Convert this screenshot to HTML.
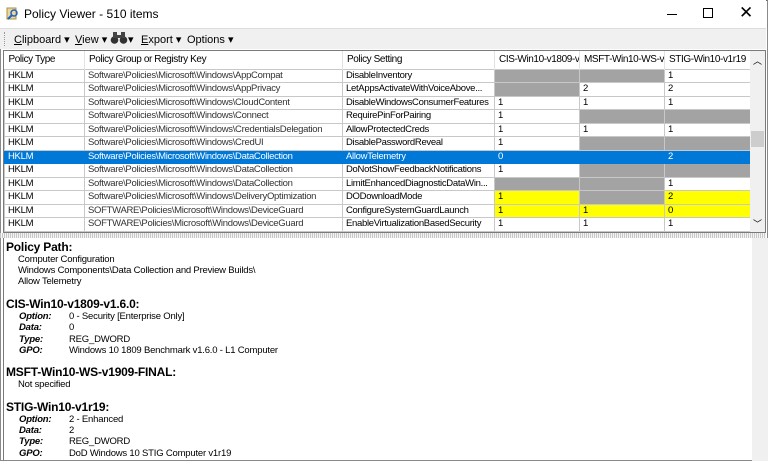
<!DOCTYPE html>
<html><head><meta charset="utf-8"><style>
*{margin:0;padding:0;box-sizing:border-box}
body{width:768px;height:461px;overflow:hidden;background:#fff;font-family:"Liberation Sans",Arial,sans-serif;position:relative;color:#000}
.win{position:absolute;left:0;top:0;width:768px;height:461px;border:1px solid #8a8a8a;border-top:1px solid #6e6e6e}
.title{position:absolute;left:0;top:0;width:766px;height:28px;background:#fff;font-size:12px}
.tb{position:absolute;left:0;top:28px;width:766px;height:21px;background:#f0f0f0;font-size:11px;border-top:1px solid #ddd}
.tb span{position:absolute;top:4px}
.grid{position:absolute;left:3px;top:50px;width:763px;height:183px;border:1px solid #7a7a7a;background:#fff;overflow:hidden}
table{border-collapse:collapse;table-layout:fixed;width:746px;font-size:9.5px;letter-spacing:-0.3px;position:absolute;left:0;top:0}
td{height:13.5px;border:1px solid #c8c8c8;padding:0 3px;white-space:nowrap;overflow:hidden;line-height:12px}
th{height:18px;font-weight:normal;text-align:left;padding:0 4px;border-right:1px solid #e3e3e3;font-size:10px;letter-spacing:-0.4px;white-space:nowrap;overflow:hidden;background:#fff}
.g{background:#a3a3a3}
.y{background:#ffff00}
tr.sel td{background:#0078d7;color:#fff;border-color:#0078d7}
.k{color:#333}
.vs{position:absolute;right:0;top:0;width:15px;height:181px;background:#f0f0f0}
.split{position:absolute;left:0;top:233px;width:766px;height:5px;background:repeating-linear-gradient(90deg,#c8c8c8 0 1px,#f4f4f4 1px 2px)}
.bot{position:absolute;left:3px;top:238px;width:763px;height:223px;border-left:1px solid #7a7a7a;font-size:9.5px;letter-spacing:-0.2px}
.bot div{position:absolute;white-space:nowrap}
.h{font-weight:bold;font-size:12px;left:2px}
.l{font-weight:bold;font-style:italic;left:15px}
.v{left:65px}
.p{left:14px}
.bvs{position:absolute;right:0;top:238px;width:16px;height:223px;background:#f0f0f0}
</style></head><body>
<div class="win"></div>
<div class="title">
<svg style="position:absolute;left:6px;top:7px" width="14" height="14" viewBox="0 0 14 14"><rect x="1" y="1" width="9" height="11" fill="#e8d8a0" stroke="#b09040"/><circle cx="8" cy="6" r="3" fill="none" stroke="#2060c0" stroke-width="1.5"/><line x1="6" y1="8" x2="2" y2="12" stroke="#2060c0" stroke-width="2"/></svg>
<span style="position:absolute;left:24px;top:7px">Policy Viewer - 510 items</span>
<div style="position:absolute;left:667px;top:14px;width:10px;height:1px;background:#000"></div>
<div style="position:absolute;left:703px;top:8px;width:10px;height:10px;border:1px solid #000"></div>
<span style="position:absolute;left:739px;top:3px;font-size:17px;font-weight:300">✕</span>
</div>
<div class="tb">
<div style="position:absolute;left:4px;top:3px;height:14px;border-left:1px dotted #999"></div>
<span style="left:14px"><u>C</u>lipboard ▾</span>
<span style="left:75px"><u>V</u>iew ▾</span>
<svg style="position:absolute;left:110px;top:2px" width="18" height="14" viewBox="0 0 18 14"><circle cx="4.5" cy="9" r="3.8" fill="#333"/><circle cx="13.5" cy="9" r="3.8" fill="#333"/><rect x="3" y="1" width="4" height="6" fill="#444"/><rect x="11" y="1" width="4" height="6" fill="#444"/><rect x="7" y="4" width="4" height="3" fill="#444"/></svg>
<span style="left:128px">▾</span>
<span style="left:141px"><u>E</u>xport ▾</span>
<span style="left:187px">Options ▾</span>
</div>
<div class="grid">
<table>
<colgroup><col style="width:80px"><col style="width:258px"><col style="width:152px"><col style="width:85px"><col style="width:85px"><col style="width:86px"></colgroup>
<tr><th>Policy Type</th><th>Policy Group or Registry Key</th><th>Policy Setting</th><th>CIS-Win10-v1809-v</th><th>MSFT-Win10-WS-v</th><th>STIG-Win10-v1r19</th></tr>
<tr><td>HKLM</td><td class="k">Software\Policies\Microsoft\Windows\AppCompat</td><td>DisableInventory</td><td class="g"></td><td class="g"></td><td>1</td></tr>
<tr><td>HKLM</td><td class="k">Software\Policies\Microsoft\Windows\AppPrivacy</td><td>LetAppsActivateWithVoiceAbove...</td><td class="g"></td><td>2</td><td>2</td></tr>
<tr><td>HKLM</td><td class="k">Software\Policies\Microsoft\Windows\CloudContent</td><td>DisableWindowsConsumerFeatures</td><td>1</td><td>1</td><td>1</td></tr>
<tr><td>HKLM</td><td class="k">Software\Policies\Microsoft\Windows\Connect</td><td>RequirePinForPairing</td><td>1</td><td class="g"></td><td class="g"></td></tr>
<tr><td>HKLM</td><td class="k">Software\Policies\Microsoft\Windows\CredentialsDelegation</td><td>AllowProtectedCreds</td><td>1</td><td>1</td><td>1</td></tr>
<tr><td>HKLM</td><td class="k">Software\Policies\Microsoft\Windows\CredUI</td><td>DisablePasswordReveal</td><td>1</td><td class="g"></td><td class="g"></td></tr>
<tr class="sel"><td>HKLM</td><td>Software\Policies\Microsoft\Windows\DataCollection</td><td>AllowTelemetry</td><td>0</td><td></td><td>2</td></tr>
<tr><td>HKLM</td><td class="k">Software\Policies\Microsoft\Windows\DataCollection</td><td>DoNotShowFeedbackNotifications</td><td>1</td><td class="g"></td><td class="g"></td></tr>
<tr><td>HKLM</td><td class="k">Software\Policies\Microsoft\Windows\DataCollection</td><td>LimitEnhancedDiagnosticDataWin...</td><td class="g"></td><td class="g"></td><td>1</td></tr>
<tr><td>HKLM</td><td class="k">Software\Policies\Microsoft\Windows\DeliveryOptimization</td><td>DODownloadMode</td><td class="y">1</td><td class="g"></td><td class="y">2</td></tr>
<tr><td>HKLM</td><td class="k">SOFTWARE\Policies\Microsoft\Windows\DeviceGuard</td><td>ConfigureSystemGuardLaunch</td><td class="y">1</td><td class="y">1</td><td class="y">0</td></tr>
<tr><td>HKLM</td><td class="k">SOFTWARE\Policies\Microsoft\Windows\DeviceGuard</td><td>EnableVirtualizationBasedSecurity</td><td>1</td><td>1</td><td>1</td></tr>
</table>
<div class="vs"><span style="position:absolute;left:3px;top:3px;font-size:9px">︿</span><div style="position:absolute;left:1px;top:80px;width:13px;height:16px;background:#cdcdcd"></div><span style="position:absolute;left:3px;top:166px;font-size:9px">﹀</span></div>
</div>
<div class="split"></div>
<div class="bot">
<div class="h" style="top:2px">Policy Path:</div>
<div class="p" style="top:16px">Computer Configuration</div>
<div class="p" style="top:27px">Windows Components\Data Collection and Preview Builds\</div>
<div class="p" style="top:38px">Allow Telemetry</div>
<div class="h" style="top:59px">CIS-Win10-v1809-v1.6.0:</div>
<div class="l" style="top:73px">Option:</div><div class="v" style="top:73px">0 - Security [Enterprise Only]</div>
<div class="l" style="top:84px">Data:</div><div class="v" style="top:84px">0</div>
<div class="l" style="top:96px">Type:</div><div class="v" style="top:96px">REG_DWORD</div>
<div class="l" style="top:107px">GPO:</div><div class="v" style="top:107px">Windows 10 1809 Benchmark v1.6.0 - L1 Computer</div>
<div class="h" style="top:127px">MSFT-Win10-WS-v1909-FINAL:</div>
<div class="p" style="top:141px">Not specified</div>
<div class="h" style="top:162px">STIG-Win10-v1r19:</div>
<div class="l" style="top:176px">Option:</div><div class="v" style="top:176px">2 - Enhanced</div>
<div class="l" style="top:187px">Data:</div><div class="v" style="top:187px">2</div>
<div class="l" style="top:198px">Type:</div><div class="v" style="top:198px">REG_DWORD</div>
<div class="l" style="top:210px">GPO:</div><div class="v" style="top:210px">DoD Windows 10 STIG Computer v1r19</div>
</div>
<div class="bvs"></div>
</body></html>
